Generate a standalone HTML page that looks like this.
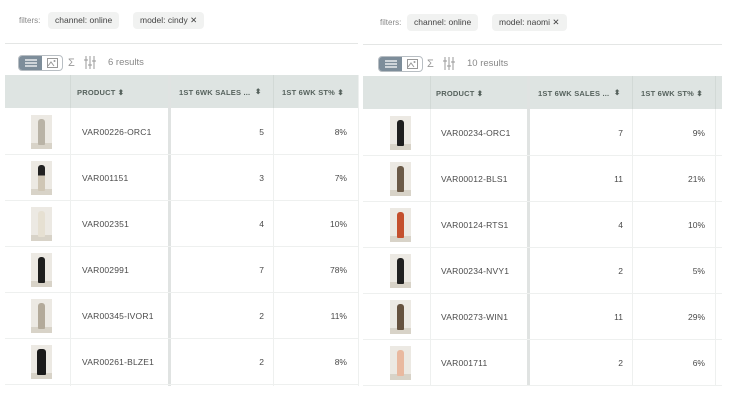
<!DOCTYPE html>
<html><head><meta charset="utf-8"><style>
*{margin:0;padding:0;box-sizing:border-box}
body{width:740px;height:401px;background:#fff;font-family:"Liberation Sans",sans-serif;position:relative;overflow:hidden;color:#444}
.a{position:absolute}
.flt{font-size:8px;color:#888}
.chip{position:absolute;height:17px;background:#f1f2f1;border-radius:4px;font-size:8.5px;color:#444;line-height:17px;padding:0 7px;white-space:nowrap}
.hl{position:absolute;height:1px;background:#e4e6e5}
.hd{position:absolute;background:#dee4e2}
.ht{position:absolute;font-size:7.5px;font-weight:bold;color:#56625d;letter-spacing:.2px;white-space:nowrap}
.vl{position:absolute;width:1px;background:#eef0ef}
.dv{position:absolute;width:3px;background:#e0e3e2}
.ct{position:absolute;font-size:8.5px;color:#4a4a4a;white-space:nowrap;letter-spacing:.2px}
.num{position:absolute;font-size:8.5px;color:#4a4a4a;text-align:right}
.th{position:absolute;width:21px;height:34px;background:#ece9e3;overflow:hidden}
.th i{position:absolute;left:7px;top:4px;width:7px;height:26px;border-radius:3px 3px 1px 1px}
.th b{position:absolute;left:0;bottom:0;width:21px;height:6px;background:#d8d3c8}
.tog{position:absolute;width:45px;height:16px;border:1px solid #b8bec3;border-radius:4px;overflow:hidden}
.tog span{position:absolute;left:0;top:0;width:23px;height:14px;background:#7d8d9a}
.res{position:absolute;font-size:9.5px;color:#888}
.ic{position:absolute;font-size:11px;color:#999}
</style></head><body>

<!-- LEFT PANEL -->
<div class="a flt" style="left:19px;top:16px">filters:</div>
<div class="chip" style="left:48px;top:12px">channel: online</div>
<div class="chip" style="left:133px;top:12px">model: cindy ✕</div>
<div class="hl" style="left:5px;top:43px;width:353px"></div>
<div class="tog" style="left:18px;top:55px"><span></span>
<svg class="a" style="left:6px;top:3px" width="12" height="8"><path d="M0 1H12M0 4H12M0 7H12" stroke="#fff" stroke-width="1.2"/></svg>
<svg class="a" style="left:28px;top:2px" width="11" height="10"><rect x=".5" y=".5" width="10" height="9" fill="none" stroke="#999"/><path d="M1 8L4 4L7 8" stroke="#999" fill="none"/><circle cx="7.5" cy="3" r="1" fill="#999"/></svg></div>
<div class="ic" style="left:68px;top:57px">Σ</div>
<svg class="a" style="left:84px;top:56px" width="12" height="13"><path d="M2 0V13M6 0V13M10 0V13M0 4H4M4 9H8M8 5H12" stroke="#999" stroke-width="1"/></svg>
<div class="res" style="left:108px;top:57px">6 results</div>

<div class="hd" style="left:5px;top:75px;width:354px;height:33px"></div>
<div class="vl" style="left:70px;top:75px;height:33px;background:#d2d9d6"></div>
<div class="vl" style="left:273px;top:75px;height:33px;background:#d2d9d6"></div>
<div class="ht" style="left:77px;top:88px">PRODUCT ⬍</div>
<div class="ht" style="left:179px;top:88px">1ST 6WK SALES ...</div>
<div class="ht" style="left:255px;top:87px">⬍</div>
<div class="ht" style="left:282px;top:88px">1ST 6WK ST% ⬍</div>
<div class="dv" style="left:168px;top:75px;height:311px"></div>
<div class="vl" style="left:70px;top:108px;height:278px"></div>
<div class="vl" style="left:273px;top:108px;height:278px"></div>
<div class="vl" style="left:358px;top:75px;height:311px"></div>

<!-- RIGHT PANEL -->
<div class="a flt" style="left:380px;top:18px">filters:</div>
<div class="chip" style="left:407px;top:14px">channel: online</div>
<div class="chip" style="left:492px;top:14px">model: naomi ✕</div>
<div class="hl" style="left:363px;top:44px;width:359px"></div>
<div class="tog" style="left:378px;top:56px"><span></span>
<svg class="a" style="left:6px;top:3px" width="12" height="8"><path d="M0 1H12M0 4H12M0 7H12" stroke="#fff" stroke-width="1.2"/></svg>
<svg class="a" style="left:28px;top:2px" width="11" height="10"><rect x=".5" y=".5" width="10" height="9" fill="none" stroke="#999"/><path d="M1 8L4 4L7 8" stroke="#999" fill="none"/><circle cx="7.5" cy="3" r="1" fill="#999"/></svg></div>
<div class="ic" style="left:427px;top:58px">Σ</div>
<svg class="a" style="left:443px;top:57px" width="12" height="13"><path d="M2 0V13M6 0V13M10 0V13M0 4H4M4 9H8M8 5H12" stroke="#999" stroke-width="1"/></svg>
<div class="res" style="left:467px;top:58px">10 results</div>

<div class="hd" style="left:363px;top:76px;width:359px;height:33px"></div>
<div class="vl" style="left:430px;top:76px;height:33px;background:#d2d9d6"></div>
<div class="vl" style="left:632px;top:76px;height:33px;background:#d2d9d6"></div>
<div class="vl" style="left:715px;top:76px;height:33px;background:#d2d9d6"></div>
<div class="ht" style="left:436px;top:89px">PRODUCT ⬍</div>
<div class="ht" style="left:538px;top:89px">1ST 6WK SALES ...</div>
<div class="ht" style="left:614px;top:88px">⬍</div>
<div class="ht" style="left:641px;top:89px">1ST 6WK ST% ⬍</div>
<div class="dv" style="left:527px;top:76px;height:310px"></div>
<div class="vl" style="left:430px;top:109px;height:277px"></div>
<div class="vl" style="left:632px;top:109px;height:277px"></div>
<div class="vl" style="left:715px;top:109px;height:277px"></div>

<!-- LEFT ROWS -->
<div class="hl" style="left:5px;top:154px;width:354px;background:#eef0ef"></div>
<div class="hl" style="left:5px;top:200px;width:354px;background:#eef0ef"></div>
<div class="hl" style="left:5px;top:246px;width:354px;background:#eef0ef"></div>
<div class="hl" style="left:5px;top:292px;width:354px;background:#eef0ef"></div>
<div class="hl" style="left:5px;top:338px;width:354px;background:#eef0ef"></div>
<div class="hl" style="left:5px;top:384px;width:354px;background:#eef0ef"></div>

<div class="th" style="left:31px;top:115px"><b></b><i style="background:#b9b3a6"></i></div>
<div class="th" style="left:31px;top:161px"><b></b><i style="background:linear-gradient(#222 40%,#cfc6b5 40%)"></i></div>
<div class="th" style="left:31px;top:207px"><b></b><i style="background:#e6e0d2"></i></div>
<div class="th" style="left:31px;top:253px"><b></b><i style="background:#1e1e1e"></i></div>
<div class="th" style="left:31px;top:299px"><b></b><i style="background:#b3aa9a"></i></div>
<div class="th" style="left:31px;top:345px"><b></b><i style="background:#1a1a1a;width:9px;left:6px"></i></div>

<div class="ct" style="left:82px;top:127px">VAR00226-ORC1</div>
<div class="ct" style="left:82px;top:173px">VAR001151</div>
<div class="ct" style="left:82px;top:219px">VAR002351</div>
<div class="ct" style="left:82px;top:265px">VAR002991</div>
<div class="ct" style="left:82px;top:311px">VAR00345-IVOR1</div>
<div class="ct" style="left:82px;top:357px">VAR00261-BLZE1</div>

<div class="num" style="left:200px;width:64px;top:127px">5</div>
<div class="num" style="left:200px;width:64px;top:173px">3</div>
<div class="num" style="left:200px;width:64px;top:219px">4</div>
<div class="num" style="left:200px;width:64px;top:265px">7</div>
<div class="num" style="left:200px;width:64px;top:311px">2</div>
<div class="num" style="left:200px;width:64px;top:357px">2</div>
<div class="num" style="left:280px;width:67px;top:127px">8%</div>
<div class="num" style="left:280px;width:67px;top:173px">7%</div>
<div class="num" style="left:280px;width:67px;top:219px">10%</div>
<div class="num" style="left:280px;width:67px;top:265px">78%</div>
<div class="num" style="left:280px;width:67px;top:311px">11%</div>
<div class="num" style="left:280px;width:67px;top:357px">8%</div>

<!-- RIGHT ROWS -->
<div class="hl" style="left:363px;top:155px;width:359px;background:#eef0ef"></div>
<div class="hl" style="left:363px;top:201px;width:359px;background:#eef0ef"></div>
<div class="hl" style="left:363px;top:247px;width:359px;background:#eef0ef"></div>
<div class="hl" style="left:363px;top:293px;width:359px;background:#eef0ef"></div>
<div class="hl" style="left:363px;top:339px;width:359px;background:#eef0ef"></div>
<div class="hl" style="left:363px;top:385px;width:359px;background:#eef0ef"></div>

<div class="th" style="left:390px;top:116px"><b></b><i style="background:#1e1e1e"></i></div>
<div class="th" style="left:390px;top:162px"><b></b><i style="background:#6b5a48"></i></div>
<div class="th" style="left:390px;top:208px"><b></b><i style="background:#c4502e"></i></div>
<div class="th" style="left:390px;top:254px"><b></b><i style="background:#202020"></i></div>
<div class="th" style="left:390px;top:300px"><b></b><i style="background:#66523f"></i></div>
<div class="th" style="left:390px;top:346px"><b></b><i style="background:#e9b9a0"></i></div>

<div class="ct" style="left:441px;top:128px">VAR00234-ORC1</div>
<div class="ct" style="left:441px;top:174px">VAR00012-BLS1</div>
<div class="ct" style="left:441px;top:220px">VAR00124-RTS1</div>
<div class="ct" style="left:441px;top:266px">VAR00234-NVY1</div>
<div class="ct" style="left:441px;top:312px">VAR00273-WIN1</div>
<div class="ct" style="left:441px;top:358px">VAR001711</div>

<div class="num" style="left:560px;width:63px;top:128px">7</div>
<div class="num" style="left:560px;width:63px;top:174px">11</div>
<div class="num" style="left:560px;width:63px;top:220px">4</div>
<div class="num" style="left:560px;width:63px;top:266px">2</div>
<div class="num" style="left:560px;width:63px;top:312px">11</div>
<div class="num" style="left:560px;width:63px;top:358px">2</div>
<div class="num" style="left:640px;width:65px;top:128px">9%</div>
<div class="num" style="left:640px;width:65px;top:174px">21%</div>
<div class="num" style="left:640px;width:65px;top:220px">10%</div>
<div class="num" style="left:640px;width:65px;top:266px">5%</div>
<div class="num" style="left:640px;width:65px;top:312px">29%</div>
<div class="num" style="left:640px;width:65px;top:358px">6%</div>

</body></html>
